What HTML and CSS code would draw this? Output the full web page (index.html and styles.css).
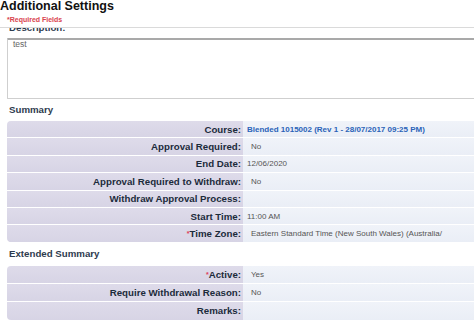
FILE: index.html
```html
<!DOCTYPE html>
<html lang="en">
<head>
  <meta charset="UTF-8">
  <meta name="viewport" content="width=device-width, initial-scale=1.0">
  <title>Additional Settings</title>
  <link rel="stylesheet" href="styles.css">
</head>
<body>
  
  <div class="page-head">
    <h1 class="page-title">Additional Settings</h1>
    <p class="required">*Required Fields</p>
  </div>

  <div class="content">
    <!-- label is scrolled mostly under the header -->
    <div class="field-clip"><span class="field-label">Description:</span></div>
    <textarea class="description" readonly>test</textarea>

    <h2 class="section-title">Summary</h2>
    <div class="detail-table">
      <div class="row">
        <div class="label">Course:</div>
        <div class="value link">Blended 1015002 (Rev 1 - 28/07/2017 09:25 PM)</div>
      </div>
      <div class="row">
        <div class="label">Approval Required:</div>
        <div class="value pad">No</div>
      </div>
      <div class="row">
        <div class="label">End Date:</div>
        <div class="value">12/06/2020</div>
      </div>
      <div class="row">
        <div class="label">Approval Required to Withdraw:</div>
        <div class="value pad">No</div>
      </div>
      <div class="row">
        <div class="label">Withdraw Approval Process:</div>
        <div class="value"></div>
      </div>
      <div class="row">
        <div class="label">Start Time:</div>
        <div class="value">11:00 AM</div>
      </div>
      <div class="row">
        <div class="label"><span class="star">*</span>Time Zone:</div>
        <div class="value pad">Eastern Standard Time (New South Wales) (Australia/</div>
      </div>
    </div>

    <h2 class="section-title">Extended Summary</h2>
    <div class="detail-table extended">
      <div class="row">
        <div class="label"><span class="star">*</span>Active:</div>
        <div class="value pad">Yes</div>
      </div>
      <div class="row">
        <div class="label">Require Withdrawal Reason:</div>
        <div class="value pad">No</div>
      </div>
      <div class="row">
        <div class="label">Remarks:</div>
        <div class="value"></div>
      </div>
    </div>
  </div>
</body>
</html>
```
FILE: styles.css
```css
html, body {
  margin: 0;
  overflow: hidden;
  background-color: #fff;
}
body {
  font-family: "Liberation Sans", Arial, sans-serif;
  color: #1c2b3b;
}
.page-head {
  height: 27px;
  background-color: #fff;
  border-bottom: 1px solid #dadada;
}
.page-title {
  margin: 0;
  font-size: 12.5px;
  line-height: 12px;
  font-weight: bold;
  color: #111;
}
.required {
  margin: 4px 0 0;
  padding-left: 7px;
  font-size: 7px;
  line-height: 8px;
  font-weight: bold;
  color: #d9434e;
}
.star {
  color: #e0405a;
  font-size: 7px;
  vertical-align: 2px;
}
.content {
  padding-left: 7px;
}
.field-clip {
  display: flex;
  align-items: flex-end;
  height: 6px;
  overflow: hidden;
}
.field-label {
  padding-left: 2px;
  font-size: 9.7px;
  line-height: 12px;
  font-weight: bold;
  color: #2e3b4e;
}
.description {
  display: block;
  box-sizing: border-box;
  width: calc(100% + 30px);
  height: 61px;
  margin: 3.5px 0 0;
  padding: 0 5px;
  border: 1px solid #cfcfcf;
  border-top: 2px solid #a9a9a9;
  border-radius: 1px;
  font-family: "Liberation Sans", Arial, sans-serif;
  font-size: 8.5px;
  line-height: 9px;
  color: #666;
  resize: none;
  outline: none;
}
.section-title {
  margin: 5px 0 0;
  padding-left: 2px;
  font-size: 9.7px;
  line-height: 12px;
  font-weight: bold;
  color: #2e3b4e;
}
.detail-table {
  display: grid;
  grid-auto-rows: 16.4px;
  row-gap: 1px;
  width: calc(100% + 30px);
  margin-top: 5.5px;
  background-color: #fff;
  border-radius: 4px;
  overflow: hidden;
}
.detail-table.extended {
  grid-auto-rows: 17.3px;
  margin-top: 6px;
}
.detail-table + .section-title {
  margin-top: 6px;
}
.row {
  display: grid;
  grid-template-columns: 236px 1fr;
}
.label {
  display: flex;
  align-items: center;
  justify-content: flex-end;
  padding-right: 2px;
  background: linear-gradient(#dedbea, #d7d4e5);
  font-size: 9.7px;
  font-weight: bold;
  white-space: nowrap;
  color: #1c2b3b;
}
.value {
  display: flex;
  align-items: center;
  padding-left: 4px;
  background: linear-gradient(#f0f3f9, #eaeef6);
  font-size: 8px;
  color: #555;
  white-space: nowrap;
}
.value.pad {
  padding-left: 8px;
}
.value.link {
  color: #2a63b8;
  font-weight: bold;
}
```
